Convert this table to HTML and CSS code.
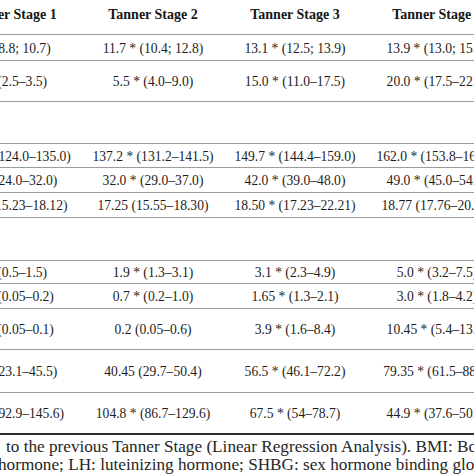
FILE: index.html
```html
<!DOCTYPE html>
<html>
<head>
<meta charset="utf-8">
<link rel="stylesheet" href="styles.css">
</head>
<body>
<div class="page">
  <div class="sheet">
    <div class="row head h35">
      <div>Tanner Stage 1</div><div>Tanner Stage 2</div><div>Tanner Stage 3</div><div>Tanner Stage 4</div>
    </div>
    <div class="row h26">
      <div>9.9 (8.8; 10.7)</div><div>11.7 * (10.4; 12.8)</div><div>13.1 * (12.5; 13.9)</div><div>13.9 * (13.0; 15.0)</div>
    </div>
    <div class="row h41">
      <div>3.0 (2.5–3.5)</div><div>5.5 * (4.0–9.0)</div><div>15.0 * (11.0–17.5)</div><div>20.0 * (17.5–22.5)</div>
    </div>
    <div class="row h42 section"><div></div><div></div><div></div><div></div></div>
    <div class="row h24">
      <div>129.25 (124.0–135.0)</div><div>137.2 * (131.2–141.5)</div><div>149.7 * (144.4–159.0)</div><div>162.0 * (153.8–169.0)</div>
    </div>
    <div class="row h25">
      <div>28.0 (24.0–32.0)</div><div>32.0 * (29.0–37.0)</div><div>42.0 * (39.0–48.0)</div><div>49.0 * (45.0–54.0)</div>
    </div>
    <div class="row h25">
      <div>16.47 (15.23–18.12)</div><div>17.25 (15.55–18.30)</div><div>18.50 * (17.23–22.21)</div><div>18.77 (17.76–20.94)</div>
    </div>
    <div class="row h43 section"><div></div><div></div><div></div><div></div></div>
    <div class="row h23">
      <div>1.0 (0.5–1.5)</div><div>1.9 * (1.3–3.1)</div><div>3.1 * (2.3–4.9)</div><div>5.0 * (3.2–7.5)</div>
    </div>
    <div class="row h25">
      <div>0.10 (0.05–0.2)</div><div>0.7 * (0.2–1.0)</div><div>1.65 * (1.3–2.1)</div><div>3.0 * (1.8–4.2)</div>
    </div>
    <div class="row h41">
      <div>0.05 (0.05–0.1)</div><div>0.2 (0.05–0.6)</div><div>3.9 * (1.6–8.4)</div><div>10.45 * (5.4–13.8)</div>
    </div>
    <div class="row h43">
      <div>32.8 (23.1–45.5)</div><div>40.45 (29.7–50.4)</div><div>56.5 * (46.1–72.2)</div><div>79.35 * (61.5–88.9)</div>
    </div>
    <div class="row h42 last">
      <div>120.0 (92.9–145.6)</div><div>104.8 * (86.7–129.6)</div><div>67.5 * (54–78.7)</div><div>44.9 * (37.6–50.2)</div>
    </div>
  </div>
  <div class="note">
    <div class="note-line first">to the previous Tanner Stage (Linear Regression Analysis). BMI: Body mass index; FSH: follicle-stimulating</div>
    <div class="note-line second">hormone; LH: luteinizing hormone; SHBG: sex hormone binding globulin.</div>
  </div>
</div>
</body>
</html>
```

FILE: styles.css
```css
html, body {
  margin: 0;
  padding: 0;
  overflow: hidden;
  background: #ffffff;
}

.page {
  width: 474px;
  height: 474px;
  overflow: hidden;
  font-family: "Liberation Serif", "Times New Roman", serif;
  color: #1c1c1c;
}

.sheet {
  margin-left: -58px;
  width: 566px;
}

.row {
  display: grid;
  grid-template-columns: 140px 142px 142px 142px;
  align-items: center;
  box-sizing: border-box;
  border-bottom: 1px solid #9c9c9c;
  font-size: 13.6px;
  line-height: 16px;
  padding-top: 2px;
  white-space: nowrap;
}

.row > div {
  text-align: center;
}

.head {
  font-weight: bold;
  font-size: 14px;
  padding-top: 0;
  padding-bottom: 5px;
  color: #161616;
}

.last {
  border-bottom: 2px solid #2e2e2e;
}

.h23 { height: 23px; }
.h24 { height: 24px; }
.h25 { height: 25px; }
.h26 { height: 26px; }
.h35 { height: 35px; }
.h41 { height: 41px; }
.h42 { height: 42px; }
.h43 { height: 43px; }

.note {
  margin-top: 3px;
  font-size: 17.2px;
  line-height: 17.5px;
  color: #262626;
  white-space: nowrap;
}

.note-line.first {
  padding-left: 6px;
}

.note-line.second {
  margin-left: -2px;
}
```
